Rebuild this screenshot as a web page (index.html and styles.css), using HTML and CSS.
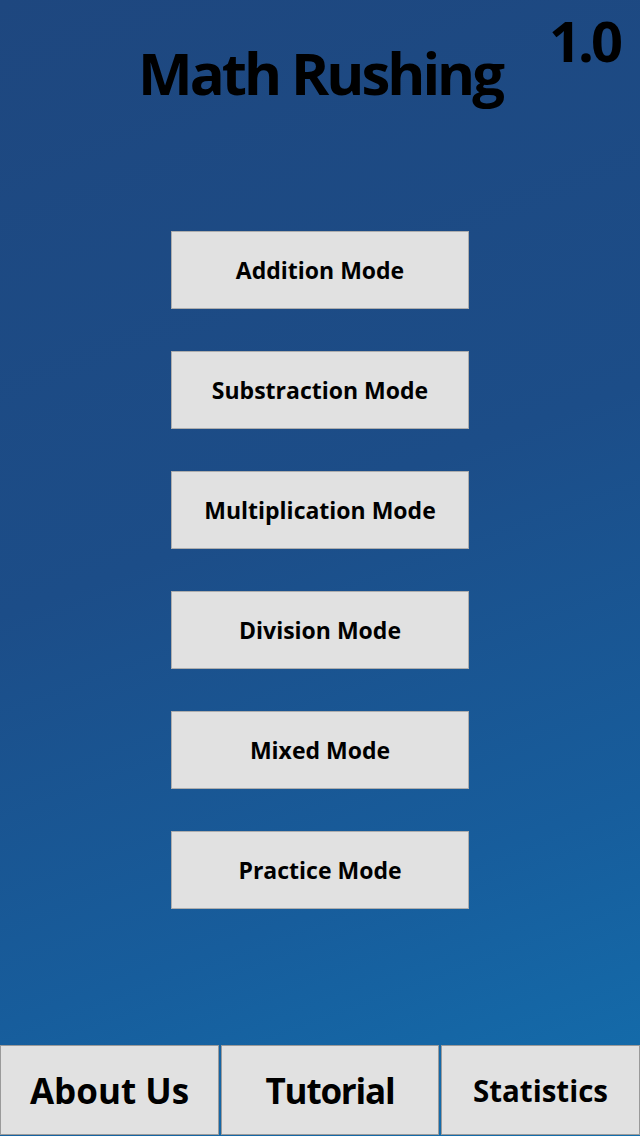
FILE: index.html
```html
<!DOCTYPE html>
<html lang="en">
<head>
<meta charset="utf-8">
<title>Math Rushing</title>
<link rel="stylesheet" href="styles.css">
</head>
<body>
<div class="screen">
  <header class="header">
    <h1 class="title">Math Rushing</h1>
    <span class="version">1.0</span>
  </header>
  <nav class="modes">
    <button class="mode">Addition Mode</button>
    <button class="mode">Substraction Mode</button>
    <button class="mode">Multiplication Mode</button>
    <button class="mode">Division Mode</button>
    <button class="mode">Mixed Mode</button>
    <button class="mode">Practice Mode</button>
  </nav>
  <footer class="footer">
    <button class="tab tab-big">About Us</button>
    <button class="tab tab-big tab-narrow">Tutorial</button>
    <button class="tab tab-small">Statistics</button>
  </footer>
</div>
</body>
</html>
```

FILE: styles.css
```css
html, body {
  margin: 0;
  padding: 0;
}
body {
  font-family: "Open Sans", "Noto Sans", sans-serif;
  color: #000;
}
.screen {
  position: relative;
  width: 640px;
  height: 1136px;
  display: flex;
  flex-direction: column;
  background: linear-gradient(160deg, #1e477f 0%, #1c4d88 45%, #175d9c 75%, #136fae 100%);
  overflow: hidden;
}
.header {
  height: 231px;
  display: flex;
  justify-content: center;
}
.title {
  margin: 33px 0 0;
  font-size: 58px;
  font-weight: 700;
  letter-spacing: -3px;
  line-height: 80px;
  height: 80px;
}
.version {
  position: absolute;
  top: 5px;
  right: 20px;
  font-size: 56px;
  font-weight: 700;
  letter-spacing: -3px;
  line-height: 70px;
}
.modes {
  display: flex;
  flex-direction: column;
  align-items: center;
  gap: 42px;
}
.mode {
  width: 298px;
  height: 78px;
  margin: 0;
  padding: 0;
  background: #e1e1e1;
  border: 1px solid #adadad;
  font-family: inherit;
  font-size: 23px;
  font-weight: 700;
  color: #000;
}
.footer {
  margin-top: auto;
  margin-bottom: 1px;
  display: grid;
  grid-template-columns: 219px 218px 1fr;
  gap: 2px;
  height: 90px;
}
.tab {
  margin: 0;
  padding: 0;
  background: #e1e1e1;
  border: 1px solid #9a9a9a;
  font-family: inherit;
  font-weight: 700;
  color: #000;
}
.tab-big {
  font-size: 35px;
}
.tab-narrow {
  letter-spacing: -1.2px;
}
.tab-small {
  font-size: 29.5px;
}
```
